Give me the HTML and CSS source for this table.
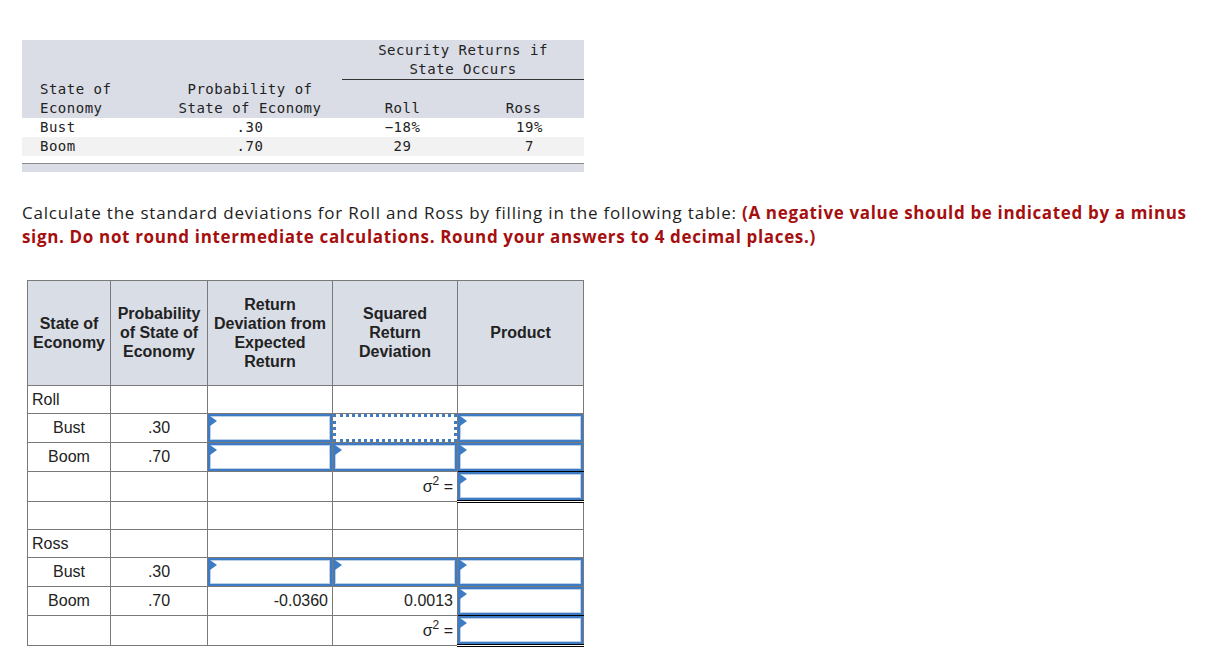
FILE: index.html
```html
<!DOCTYPE html>
<html lang="en">
<head>
<meta charset="utf-8">
<title>Standard deviation</title>
<link rel="stylesheet" href="styles.css">
</head>
<body>
<div class="page">
  <table class="src">
    <colgroup>
      <col class="s1"><col class="s2"><col class="s3"><col class="s4">
    </colgroup>
    <thead>
      <tr>
        <th rowspan="2" class="left bottom">State of<br>Economy</th>
        <th rowspan="2" class="bottom">Probability of<br>State of Economy</th>
        <th colspan="2" class="group">Security Returns if<br>State Occurs</th>
      </tr>
      <tr>
        <th class="bottom sub">Roll</th>
        <th class="bottom sub">Ross</th>
      </tr>
    </thead>
    <tbody>
      <tr>
        <td class="left">Bust</td><td>.30</td><td>−18%</td><td class="ross">19%</td>
      </tr>
      <tr class="alt">
        <td class="left">Boom</td><td>.70</td><td>29</td><td class="ross">7</td>
      </tr>
    </tbody>
  </table>
  <div class="src-foot"></div>

  <p class="instr">Calculate the standard deviations for Roll and Ross by filling in the following table: <strong>(A negative value should be indicated by a minus sign. Do not round intermediate calculations. Round your answers to 4 decimal places.)</strong></p>

  <table class="calc">
    <colgroup>
      <col class="w1"><col class="w2"><col class="w3"><col class="w4"><col class="w5">
    </colgroup>
    <thead>
      <tr>
        <th>State of<br>Economy</th>
        <th>Probability<br>of State of<br>Economy</th>
        <th>Return<br>Deviation from<br>Expected<br>Return</th>
        <th>Squared<br>Return<br>Deviation</th>
        <th>Product</th>
      </tr>
    </thead>
    <tbody>
      <tr><td class="grp">Roll</td><td></td><td></td><td></td><td></td></tr>
      <tr>
        <td class="st">Bust</td><td class="num">.30</td>
        <td class="in"><div class="box"></div></td>
        <td class="in"><div class="box focus"></div></td>
        <td class="in"><div class="box"></div></td>
      </tr>
      <tr>
        <td class="st">Boom</td><td class="num">.70</td>
        <td class="in"><div class="box"></div></td>
        <td class="in"><div class="box"></div></td>
        <td class="in above-tot"><div class="box"></div></td>
      </tr>
      <tr>
        <td></td><td></td><td></td>
        <td class="sig">σ<sup>2</sup> =</td>
        <td class="in tot"><div class="box"></div></td>
      </tr>
      <tr><td></td><td></td><td></td><td></td><td></td></tr>
      <tr><td class="grp">Ross</td><td></td><td></td><td></td><td></td></tr>
      <tr>
        <td class="st">Bust</td><td class="num">.30</td>
        <td class="in"><div class="box"></div></td>
        <td class="in"><div class="box"></div></td>
        <td class="in"><div class="box"></div></td>
      </tr>
      <tr>
        <td class="st">Boom</td><td class="num">.70</td>
        <td class="val">-0.0360</td>
        <td class="val">0.0013</td>
        <td class="in above-tot"><div class="box"></div></td>
      </tr>
      <tr>
        <td></td><td></td><td></td>
        <td class="sig">σ<sup>2</sup> =</td>
        <td class="in tot"><div class="box"></div></td>
      </tr>
    </tbody>
  </table>
</div>
</body>
</html>
```

FILE: styles.css
```css
* { box-sizing: border-box; }
html, body { margin: 0; padding: 0; background: #fff; }
.page {
  padding: 40px 0 0 22px;
  color: #222;
}

/* source table */
.src {
  border-collapse: collapse;
  table-layout: fixed;
  width: 562px;
  background: #dadde6;
  font-family: "DejaVu Sans Mono", monospace;
  font-size: 14px;
  letter-spacing: 0.5px;
  color: #222;
}
.src .s1 { width: 136px; }
.src .s2 { width: 184px; }
.src .s3 { width: 121px; }
.src .s4 { width: 121px; }
.src th, .src td {
  padding: 0;
  line-height: 19px;
  font-weight: normal;
  text-align: center;
  white-space: nowrap;
}
.src th { height: 38px; }
.src td { line-height: 19px; }
.src .bottom { vertical-align: bottom; }
.src .left { text-align: left; padding-left: 18px; }
.src .group {
  vertical-align: top;
  padding-top: 1px;
  line-height: 19px;
  border-bottom: 1px solid #333;
}
.src tbody tr { background: #fff; }
.src tbody tr.alt { background: #f2f2f2; }
.src .ross { padding-left: 12px; }
.src-foot {
  width: 562px;
  height: 9px;
  margin-top: 7px;
  background: #dadde6;
  border-top: 1px solid #8a8a8a;
}

/* instruction */
.instr {
  margin: 29px 0 31px;
  width: 1175px;
  font-family: "Open Sans", "Lato", sans-serif;
  font-size: 17px;
  letter-spacing: 0.8px;
  line-height: 24px;
  color: #1e1e1e;
}
.instr strong {
  color: #a50f0f;
  font-weight: bold;
  letter-spacing: 0.65px;
}

/* calc table */
.calc {
  margin-left: 5px;
  border-collapse: collapse;
  table-layout: fixed;
  width: 556px;
  font-family: "Liberation Sans", Arial, sans-serif;
  font-size: 16px;
  color: #222;
}
.calc .w1 { width: 83px; }
.calc .w2 { width: 97px; }
.calc .w3 { width: 125px; }
.calc .w4 { width: 125px; }
.calc .w5 { width: 126px; }
.calc th, .calc td {
  border: 1px solid #7a7a7a;
  padding: 0 3px;
  height: 28px;
  line-height: 19px;
}
.calc th {
  background: #d9dde6;
  font-weight: bold;
  height: 105px;
  text-align: center;
  vertical-align: middle;
}
.calc .grp { text-align: left; padding-left: 4px; }
.calc .st { text-align: center; }
.calc .num { text-align: center; }
.calc .val { text-align: right; padding-right: 4px; }
.calc .sig { text-align: right; padding-right: 4px; }
.calc .sig sup { font-size: 12px; line-height: 0; vertical-align: 7px; }
.calc td.in { padding: 0; }
.calc td.above-tot { border-bottom: 1px solid #000; }
.calc td.tot { border-top: 1px solid #000; border-bottom: 3px double #000; }

.box {
  position: relative;
  height: 28px;
  border: 2px solid #3d7bc5;
  box-shadow: inset 0 0 0 1px #bcd0ea;
  background: #fff;
}
.box::before {
  content: "";
  position: absolute;
  left: 0;
  top: 0;
  width: 0;
  height: 0;
  border-left: 7px solid #3d7bc5;
  border-top: 5px solid transparent;
  border-bottom: 5px solid transparent;
}
.box.focus {
  border: 3px dotted #3d7bc5;
  box-shadow: none;
}
.box.focus::before { display: none; }
```
